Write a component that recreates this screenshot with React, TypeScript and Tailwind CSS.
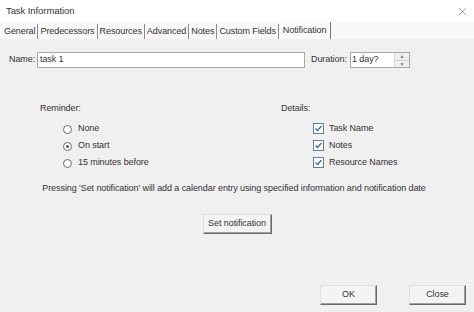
import { X } from "lucide-react";

const tabs = ["General", "Predecessors", "Resources", "Advanced", "Notes", "Custom Fields", "Notification"];

const reminders = [
  { label: "None", checked: false },
  { label: "On start", checked: true },
  { label: "15 minutes before", checked: false },
];

const details = ["Task Name", "Notes", "Resource Names"];

function Radio({ checked }: { checked: boolean }) {
  return (
    <span className="w-[9px] h-[9px] rounded-full border border-[#6a6a6a] bg-white flex items-center justify-center">
      {checked && <span className="w-[3px] h-[3px] rounded-full bg-[#555]" />}
    </span>
  );
}

function Checkbox() {
  return (
    <span className="w-[11px] h-[11px] border border-[#5b7fa5] bg-white flex items-center justify-center">
      <svg width="9" height="9" viewBox="0 0 9 9">
        <path d="M1.5 4.5 L3.5 6.5 L7.5 2" stroke="#3a6a9a" strokeWidth="1.3" fill="none" />
      </svg>
    </span>
  );
}

function Button({ children, className = "" }: { children: React.ReactNode; className?: string }) {
  return (
    <button
      className={`h-[20px] bg-[#f4f4f4] border border-[#e0e0e0] border-r-[#6a6a6a] border-b-[#6a6a6a] shadow-[inset_-1px_-1px_0_#a0a0a0] text-[9px] tracking-[-0.08px] text-[#333] ${className}`}
    >
      {children}
    </button>
  );
}

export default function App() {
  return (
    <div className="w-[474px] h-[312px] bg-[#f0f0f0] flex flex-col text-[#333] font-['Liberation_Sans',sans-serif] text-[9px] tracking-[-0.08px] overflow-hidden">
      <div className="h-[22px] bg-white flex items-center justify-between pl-[6px] pr-[5px]">
        <span className="text-[9.5px] text-[#333]">Task Information</span>
        <X size={13} strokeWidth={1} className="text-[#555]" />
      </div>

      <div className="h-[17px] bg-[#f8f8f8] flex items-end pl-[2px]">
        {tabs.map((tab) => (
          <span
            key={tab}
            className={`pl-[2px] pr-[2px] h-[15px] flex items-center border-r ${
              tab === "Notification" ? "border-[#777] h-[17px] bg-[#fafafa] pl-[4px] pr-[4px]" : "border-[#8a8a8a]"
            }`}
          >
            {tab}
          </span>
        ))}
      </div>

      <div className="flex items-center mt-[13px] pl-[9px]">
        <span className="w-[28px]">Name:</span>
        <div className="w-[268px] h-[16px] bg-white border border-[#a8a8a8] flex items-center px-[2px]">task 1</div>
        <span className="ml-[6px] w-[39px]">Duration:</span>
        <div className="w-[60px] h-[16px] bg-white border border-[#a8a8a8] flex items-center">
          <span className="flex-1 px-[1px]">1 day?</span>
          <div className="w-[15px] h-full flex flex-col border-l border-[#ddd]">
            <span className="flex-1 bg-[#f0f0f0] border-b border-[#ccc] text-[5px] leading-[6px] text-center text-[#777]">▲</span>
            <span className="flex-1 bg-[#f0f0f0] text-[5px] leading-[6px] text-center text-[#777]">▼</span>
          </div>
        </div>
      </div>

      <div className="grid grid-cols-[241px_1fr] pl-[40px] mt-[34px]">
        <div>
          <div className="h-[14px] flex items-center">Reminder:</div>
          <div className="flex flex-col mt-[6px] pl-[23px] gap-[3px]">
            {reminders.map((r) => (
              <div key={r.label} className="h-[14px] flex items-center gap-[6px]">
                <Radio checked={r.checked} />
                <span>{r.label}</span>
              </div>
            ))}
          </div>
        </div>
        <div>
          <div className="h-[14px] flex items-center">Details:</div>
          <div className="flex flex-col mt-[5px] pl-[32px] gap-[2px]">
            {details.map((d) => (
              <div key={d} className="h-[15px] flex items-center gap-[5px]">
                <Checkbox />
                <span>{d}</span>
              </div>
            ))}
          </div>
        </div>
      </div>

      <div className="mt-[12px] text-center pr-[6px]">
        Pressing 'Set notification' will add a calendar entry using specified information and notification date
      </div>

      <div className="flex justify-center mt-[18px]">
        <Button className="w-[69px]">Set notification</Button>
      </div>

      <div className="flex justify-end gap-[32px] mt-auto mb-[7px] pr-[8px]">
        <Button className="w-[57px]">OK</Button>
        <Button className="w-[57px]">Close</Button>
      </div>
    </div>
  );
}
